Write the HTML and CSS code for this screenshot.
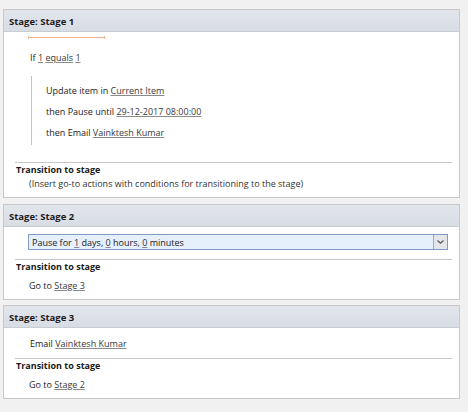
FILE: index.html
```html
<!DOCTYPE html>
<html>
<head>
<meta charset="utf-8">
<link rel="stylesheet" href="styles.css">
</head>
<body>
<div class="canvas">
  <div class="stage s1">
    <div class="stage-head">Stage: Stage 1</div>
    <div class="stage-body">
      <div class="drop-line"></div>
      <div class="row if-row">If <a>1</a> <a>equals</a> <a>1</a></div>
      <div class="block">
        <div class="brow">Update item in <a>Current Item</a></div>
        <div class="brow">then Pause until <a>29-12-2017 08:00:00</a></div>
        <div class="brow">then Email <a>Vainktesh Kumar</a></div>
      </div>
      <div class="sep sep1"></div>
      <div class="trans">Transition to stage</div>
      <div class="row sub hint">(Insert go-to actions with conditions for transitioning to the stage)</div>
    </div>
  </div>

  <div class="stage s2">
    <div class="stage-head">Stage: Stage 2</div>
    <div class="stage-body">
      <div class="dropdown">
        <span class="dd-text">Pause for <a>1</a> days, <a>0</a> hours, <a>0</a> minutes</span>
        <span class="dd-btn"><svg width="9" height="6" viewBox="0 0 9 6"><path d="M1.5 1.5 L4.5 4.2 L7.5 1.5" fill="none" stroke="#555" stroke-width="1.2"/></svg></span>
      </div>
      <div class="sep sep2"></div>
      <div class="trans">Transition to stage</div>
      <div class="row sub">Go to <a>Stage 3</a></div>
    </div>
  </div>

  <div class="stage s3">
    <div class="stage-head">Stage: Stage 3</div>
    <div class="stage-body">
      <div class="row email">Email <a>Vainktesh Kumar</a></div>
      <div class="sep sep3"></div>
      <div class="trans">Transition to stage</div>
      <div class="row sub">Go to <a>Stage 2</a></div>
    </div>
  </div>
</div>
</body>
</html>
```

FILE: styles.css
```css
html, body {
  margin: 0;
  padding: 0;
  background: #ffffff;
}
body {
  font-family: "Open Sans", "Noto Sans", "DejaVu Sans", sans-serif;
  font-size: 9px;
  color: #222222;
}
.canvas {
  width: 468px;
  height: 412px;
  background: #f1f1f1;
  padding: 9px 0 0 3px;
  box-sizing: border-box;
  display: flex;
  flex-direction: column;
}
.stage {
  width: 457px;
  box-sizing: border-box;
  background: #ffffff;
  border: 1px solid #c8c8c8;
}
.s2 { margin-top: 6px; }
.s3 { margin-top: 5px; }
.stage-head {
  height: 21px;
  line-height: 24px;
  padding-left: 5px;
  font-weight: 700;
  font-size: 9.5px;
  color: #1a1a1a;
  background: linear-gradient(#e2e6ec, #d8dce3);
  border-bottom: 1px solid #c9ccd2;
}
.stage-body {
  display: flex;
  flex-direction: column;
  padding-bottom: 5px;
}
a {
  color: #3a3a3a;
  text-decoration: underline;
  text-decoration-color: #8a8a8a;
  text-underline-offset: 1px;
}
.drop-line {
  margin: 5px 0 0 24px;
  width: 77px;
  height: 1px;
  background: #f3b08e;
  position: relative;
}
.drop-line::before,
.drop-line::after {
  content: "";
  position: absolute;
  top: -1px;
  width: 1px;
  height: 3px;
  background: #f3b08e;
}
.drop-line::before { left: 0; }
.drop-line::after { right: 0; }
.row {
  height: 16px;
  line-height: 16px;
  white-space: nowrap;
}
.if-row {
  margin: 10px 0 0 26px;
  height: 20px;
  line-height: 20px;
}
.block {
  margin: 8px 0 0 27px;
  border-left: 1px solid #c4c4c4;
  padding: 4px 0 2px 14px;
}
.brow {
  height: 21px;
  line-height: 21px;
  white-space: nowrap;
}
.sep {
  height: 1px;
  background: #c6c6c6;
  margin: 0 7px 0 11px;
}
.sep1 { margin-top: 17px; }
.sep2 { margin-top: 9px; }
.sep3 { margin-top: 6px; }
.trans {
  height: 13px;
  line-height: 14px;
  padding-left: 12px;
  font-weight: 700;
  color: #1a1a1a;
}
.sub {
  margin: 5px 0 0 25px;
}
.sub.hint {
  margin-top: 0;
  color: #333;
}
.email {
  margin: 8px 0 0 26px;
}
.dropdown {
  margin: 7px 11px 0 24px;
  height: 16px;
  box-sizing: border-box;
  border: 1px solid #7f9cc6;
  background: #e5f0fc;
  display: flex;
  align-items: center;
  justify-content: space-between;
}
.dd-text {
  padding-left: 3px;
  line-height: 13px;
  white-space: nowrap;
  color: #1a1a1a;
}
.dd-text a { color: #333; }
.dd-btn {
  width: 14px;
  height: 14px;
  box-sizing: border-box;
  border-left: 1px solid #a3a9b3;
  background: #e4e6ea;
  display: flex;
  align-items: center;
  justify-content: center;
}
```
